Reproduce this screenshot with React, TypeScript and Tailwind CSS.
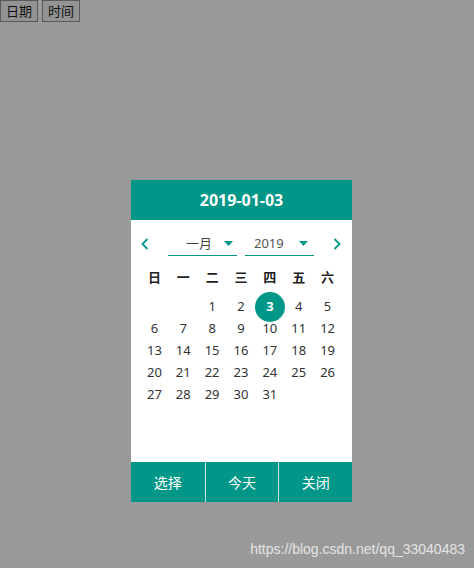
const weekdays = ["日", "一", "二", "三", "四", "五", "六"];

// January 2019 starts on a Tuesday
const days: (number | null)[] = [null, null, ...Array.from({ length: 31 }, (_, i) => i + 1)];

const font = { fontFamily: '"Noto Sans", "Noto Sans CJK SC", sans-serif' };

function Caret() {
    return (
        <svg width="9" height="5" viewBox="0 0 9 5" className="shrink-0">
            <path d="M0 0 L9 0 L4.5 5 Z" fill="#009688" />
        </svg>
    );
}

function Chevron({ dir }: { dir: "left" | "right" }) {
    return (
        <svg width="8" height="12" viewBox="0 0 8 12">
            <path
                d={dir === "left" ? "M6.5 1 L1.5 6 L6.5 11" : "M1.5 1 L6.5 6 L1.5 11"}
                stroke="#009688"
                strokeWidth="1.8"
                fill="none"
            />
        </svg>
    );
}

export default function App() {
    return (
        <div className="relative w-[474px] h-[568px] bg-[#999999] overflow-hidden" style={font}>
            <div className="flex gap-[4px]">
                <button className="h-[22px] px-[5px] bg-[#939393] border border-[#5a5a5a] text-[13px] leading-none text-[#111]">日期</button>
                <button className="h-[22px] px-[5px] bg-[#939393] border border-[#5a5a5a] text-[13px] leading-none text-[#111]">时间</button>
            </div>

            <div className="ml-[131px] mt-[158px] w-[221px] flex flex-col">
                <div className="h-[40px] bg-[#009688] flex items-center justify-center text-white font-bold text-[16px]">
                    2019-01-03
                </div>

                <div className="h-[242px] bg-white flex flex-col">
                    <div className="mt-[12px] h-[24px] flex items-stretch">
                        <div className="w-[37px] flex items-center pl-[10px]">
                            <Chevron dir="left" />
                        </div>
                        <div className="w-[69px] flex items-center border-b border-[#009688] pr-[4px]">
                            <span className="flex-1 text-center pl-[6px] text-[13px] text-[#444]">一月</span>
                            <Caret />
                        </div>
                        <div className="w-[8px]" />
                        <div className="w-[69px] flex items-center border-b border-[#009688] pr-[6px]">
                            <span className="flex-1 pl-[9px] text-[13px] text-[#555]">2019</span>
                            <Caret />
                        </div>
                        <div className="flex-1 flex items-center pl-[19px]">
                            <Chevron dir="right" />
                        </div>
                    </div>

                    <div className="mt-[11px] ml-[9px] w-[202px] grid grid-cols-7 h-[22px]">
                        {weekdays.map((w) => (
                            <div key={w} className="flex items-center justify-center font-bold text-[13px] text-[#222]">
                                {w}
                            </div>
                        ))}
                    </div>

                    <div className="mt-[7px] ml-[9px] w-[202px] grid grid-cols-7 auto-rows-[22px]">
                        {days.map((d, i) => (
                            <div key={i} className="flex items-center justify-center text-[13px] text-[#333]">
                                {d === 3 ? (
                                    <span className="w-[30px] h-[30px] shrink-0 rounded-full bg-[#009688] text-white font-bold flex items-center justify-center">
                                        3
                                    </span>
                                ) : (
                                    d
                                )}
                            </div>
                        ))}
                    </div>
                </div>

                <div className="h-[40px] bg-[#009688] grid grid-cols-3 text-white text-[14px]">
                    <button className="flex items-center justify-center">选择</button>
                    <button className="flex items-center justify-center border-l border-[#bfe3df]">今天</button>
                    <button className="flex items-center justify-center border-l border-[#bfe3df]">关闭</button>
                </div>
            </div>

            <div className="absolute right-[9px] bottom-[8px] text-[14px] text-[#e4e4e4]" style={{ fontFamily: '"Liberation Sans", Arial, sans-serif' }}>
                https://blog.csdn.net/qq_33040483
            </div>
        </div>
    );
}
